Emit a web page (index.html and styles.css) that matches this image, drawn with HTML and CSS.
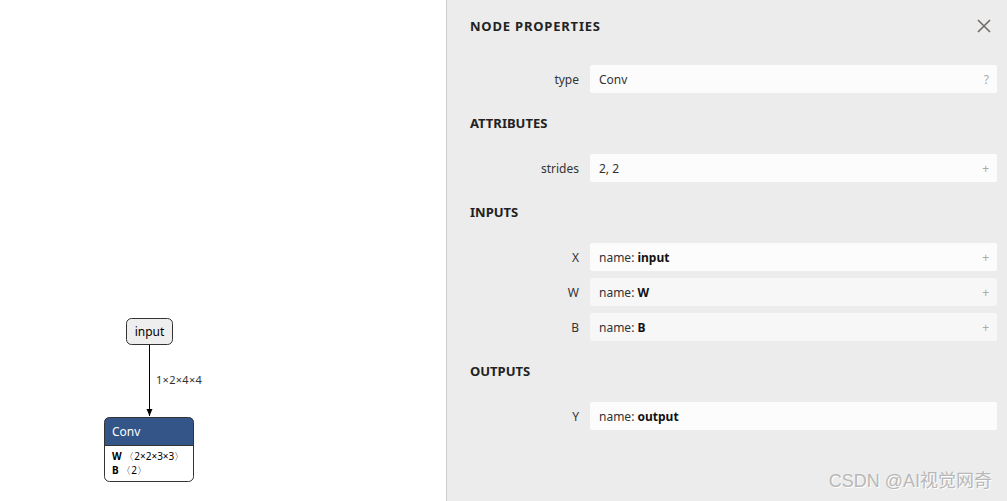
FILE: index.html
```html
<!DOCTYPE html>
<html>
<head>
<meta charset="utf-8">
<link rel="stylesheet" href="styles.css">
</head>
<body>
<div class="app">
  <div class="graph">
    <svg class="graph-svg" width="446" height="501" viewBox="0 0 446 501">
      <defs>
        <marker id="arrow" markerWidth="8" markerHeight="8" refX="7" refY="4" orient="auto" markerUnits="userSpaceOnUse">
          <path d="M0,1 L7,4 L0,7 Z" fill="#000"/>
        </marker>
      </defs>
      <rect x="126.5" y="318.5" width="46" height="26" rx="5" ry="5" fill="#eeeeee" stroke="#333" stroke-width="1"/>
      <text x="149.5" y="336" class="node-text" text-anchor="middle">input</text>
      <line x1="149.5" y1="345" x2="149.5" y2="416" stroke="#000" stroke-width="1" marker-end="url(#arrow)"/>
      <text x="156" y="384" class="edge-text">1×2×4×4</text>
      <path d="M104.5,445 L104.5,422 Q104.5,417.5 109,417.5 L189,417.5 Q193.5,417.5 193.5,422 L193.5,445 Z" fill="#335588"/>
      <path d="M104.5,445 L104.5,477 Q104.5,481.5 109,481.5 L189,481.5 Q193.5,481.5 193.5,477 L193.5,445" fill="#fff"/>
      <rect x="104.5" y="417.5" width="89" height="64" rx="5" ry="5" fill="none" stroke="#333" stroke-width="1"/>
      <line x1="104.5" y1="445.5" x2="193.5" y2="445.5" stroke="#333" stroke-width="1"/>
      <text x="112" y="436" class="node-head">Conv</text>
      <text x="112" y="460" class="attr-text"><tspan class="b">W</tspan> 〈2×2×3×3〉</text>
      <text x="112" y="474" class="attr-text"><tspan class="b">B</tspan> 〈2〉</text>
    </svg>
  </div>
  <div class="panel">
    <div class="panel-header">
      <span class="panel-title">NODE PROPERTIES</span>
      <span class="close">
        <svg width="14" height="14" viewBox="0 0 14 14"><path d="M1,1 L13,13 M13,1 L1,13" stroke="#6f6a66" stroke-width="1.6" fill="none"/></svg>
      </span>
    </div>
    <div class="rows">
      <div class="row"><div class="label">type</div><div class="value">Conv<span class="btn">?</span></div></div>
    </div>
    <div class="section-title">ATTRIBUTES</div>
    <div class="rows">
      <div class="row"><div class="label">strides</div><div class="value">2, 2<span class="btn">+</span></div></div>
    </div>
    <div class="section-title">INPUTS</div>
    <div class="rows">
      <div class="row"><div class="label">X</div><div class="value">name:&nbsp;<b>input</b><span class="btn">+</span></div></div>
      <div class="row"><div class="label">W</div><div class="value alt">name:&nbsp;<b>W</b><span class="btn">+</span></div></div>
      <div class="row"><div class="label">B</div><div class="value alt">name:&nbsp;<b>B</b><span class="btn">+</span></div></div>
    </div>
    <div class="section-title">OUTPUTS</div>
    <div class="rows">
      <div class="row"><div class="label">Y</div><div class="value">name:&nbsp;<b>output</b></div></div>
    </div>
  </div>
</div>
<div class="watermark">CSDN @AI视觉网奇</div>
</body>
</html>
```
FILE: styles.css
```css
html, body {
  margin: 0;
  padding: 0;
  width: 1007px;
  height: 501px;
  overflow: hidden;
  font-family: "Noto Sans", "Open Sans", sans-serif;
  color: #333;
}
.app {
  display: flex;
  width: 1007px;
  height: 501px;
}
.graph {
  width: 446px;
  height: 501px;
  background: #fff;
  flex: none;
}
.graph-svg {
  display: block;
}
.node-text {
  font-family: "Noto Sans", sans-serif;
  font-size: 12px;
  fill: #000;
}
.edge-text {
  font-family: "Noto Sans", sans-serif;
  font-size: 11px;
  letter-spacing: 0.3px;
  fill: #333;
}
.node-head {
  font-family: "Noto Sans", sans-serif;
  font-size: 12px;
  fill: #fff;
}
.attr-text {
  font-family: "Noto Sans", sans-serif;
  font-size: 10px;
  fill: #000;
}
.attr-text .b {
  font-weight: bold;
}
.panel {
  flex: 1;
  background: #ececec;
  border-left: 1px solid #cccccc;
  padding: 0 10px 0 23px;
  box-sizing: border-box;
}
.panel-header {
  display: flex;
  align-items: center;
  justify-content: space-between;
  height: 20px;
  margin-top: 16px;
  margin-bottom: 29px;
}
.panel-title {
  font-weight: bold;
  font-size: 13px;
  letter-spacing: 0.8px;
  color: #222;
}
.close {
  display: flex;
  margin-right: 6px;
}
.section-title {
  font-weight: bold;
  font-size: 13px;
  color: #222;
  height: 20px;
  line-height: 20px;
  margin: 20px 0 21px;
}
.rows {
  display: flex;
  flex-direction: column;
  gap: 7px;
}
.row {
  display: flex;
  align-items: flex-start;
}
.label {
  width: 109px;
  flex: none;
  text-align: right;
  font-size: 12px;
  color: #333;
  padding-top: 6px;
  padding-right: 11px;
}
.value {
  flex: 1;
  height: 28px;
  background: #fcfcfc;
  border-radius: 2px;
  display: flex;
  align-items: center;
  padding: 0 8px 0 9px;
  font-size: 12px;
  color: #333;
}
.value.alt {
  background: #f7f7f7;
}
.value b {
  color: #111;
}
.btn {
  margin-left: auto;
  color: #aaa;
  font-size: 12px;
}
.watermark {
  position: absolute;
  right: 15px;
  bottom: 9px;
  font-size: 18px;
  color: #b8b8b8;
  text-shadow: 1px 1px 0 #fff;
  font-family: "Liberation Sans", "Noto Sans CJK SC", sans-serif;
}
```
